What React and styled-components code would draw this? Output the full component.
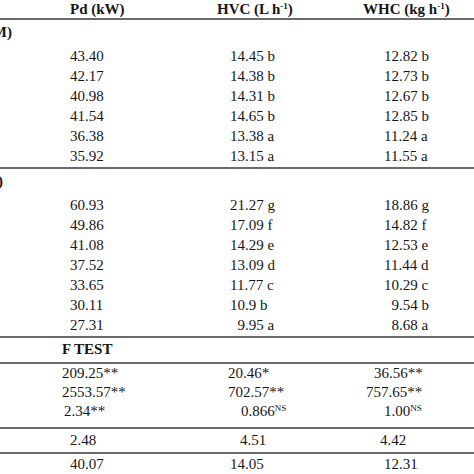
import React from "react";
import styled, { createGlobalStyle } from "styled-components";

const Global = createGlobalStyle`
  html, body { margin: 0; padding: 0; background: #fff; }
  body { font-family: "Liberation Serif", "Times New Roman", serif; color: #161616; }
`;

const Table = styled.div`
  width: 474px;
  height: 474px;
  overflow: hidden;
  font-size: 15px;
`;

const Row = styled.div`
  display: grid;
  grid-template-columns: 70px 160px 154px 90px;
  height: ${(p) => p.$h || 20}px;
  line-height: ${(p) => p.$lh || p.$h || 20}px;
  white-space: nowrap;
`;

const HeaderRow = styled(Row)`
  font-weight: bold;
  grid-template-columns: 70px 147px 146px 111px;
`;

const Rule = styled.div`
  height: 2px;
  background: #6a6a6a;
`;

const Section = styled.div`
  padding-bottom: ${(p) => p.$pb ?? 1.5}px;
`;

const LabelRow = styled.div`
  height: 20px;
  line-height: 20px;
  padding-top: 2px;
  margin-bottom: 3.5px;
  display: flex;
`;

const LabelClip = styled.div`
  width: ${(p) => p.$w}px;
  overflow: hidden;
  display: flex;
  justify-content: flex-end;
  white-space: nowrap;
  font-weight: bold;
`;

const Cell = styled.div`
  margin-left: ${(p) => p.$dx || 0}px;
  font-weight: ${(p) => (p.$bold ? "bold" : "inherit")};
`;

const Sup = styled.sup`
  font-size: 9px;
  line-height: 0;
  vertical-align: 5px;
`;

const sec1 = [
  ["43.40", "14.45 b", "12.82 b"],
  ["42.17", "14.38 b", "12.73 b"],
  ["40.98", "14.31 b", "12.67 b"],
  ["41.54", "14.65 b", "12.85 b"],
  ["36.38", "13.38 a", "11.24 a"],
  ["35.92", "13.15 a", "11.55 a"],
];

const sec2 = [
  ["60.93", "21.27 g", "18.86 g"],
  ["49.86", "17.09 f", "14.82 f"],
  ["41.08", "14.29 e", "12.53 e"],
  ["37.52", "13.09 d", "11.44 d"],
  ["33.65", "11.77 c", "10.29 c"],
  ["30.11", "10.9 b", "9.54 b"],
  ["27.31", "9.95 a", "8.68 a"],
];

const indentOf = (v) => (/^\d\./.test(v) ? 7.5 : 0);

function DataRows({ rows }) {
  return rows.map((r) => (
    <Row key={r[0]}>
      <span />
      <Cell $dx={indentOf(r[0])}>{r[0]}</Cell>
      <Cell $dx={indentOf(r[1])}>{r[1]}</Cell>
      <Cell $dx={indentOf(r[2])}>{r[2]}</Cell>
    </Row>
  ));
}

export default function App() {
  return (
    <>
      <Global />
      <Table>
        <HeaderRow $h={18}>
          <span />
          <Cell>Pd (kW)</Cell>
          <Cell>
            HVC (L h<Sup>-1</Sup>)
          </Cell>
          <Cell>
            WHC (kg h<Sup>-1</Sup>)
          </Cell>
        </HeaderRow>
        <Rule />
        <Section>
          <LabelRow>
            <LabelClip $w={12}>Rotation (RPM)</LabelClip>
          </LabelRow>
          <DataRows rows={sec1} />
        </Section>
        <Rule />
        <Section>
          <LabelRow>
            <LabelClip $w={3}>Load (kN)</LabelClip>
          </LabelRow>
          <DataRows rows={sec2} />
        </Section>
        <Rule />
        <Row $h={24} $lh={23}>
          <span />
          <Cell $dx={-8} $bold>
            F TEST
          </Cell>
          <span />
          <span />
        </Row>
        <Rule />
        <Section $pb={6}>
          <Row $h={19}>
            <span />
            <Cell $dx={-8}>209.25**</Cell>
            <Cell $dx={-2}>20.46*</Cell>
            <Cell $dx={-10}>36.56**</Cell>
          </Row>
          <Row $h={19}>
            <span />
            <Cell $dx={-8}>2553.57**</Cell>
            <Cell $dx={-2}>702.57**</Cell>
            <Cell $dx={-18}>757.65**</Cell>
          </Row>
          <Row $h={19}>
            <span />
            <Cell $dx={-6}>2.34**</Cell>
            <Cell $dx={11}>
              0.866<Sup>NS</Sup>
            </Cell>
            <Cell>
              1.00<Sup>NS</Sup>
            </Cell>
          </Row>
        </Section>
        <Rule />
        <Row $h={23}>
          <span />
          <Cell>2.48</Cell>
          <Cell $dx={10}>4.51</Cell>
          <Cell $dx={-4}>4.42</Cell>
        </Row>
        <Rule />
        <Row $h={20}>
          <span />
          <Cell>40.07</Cell>
          <Cell>14.05</Cell>
          <Cell>12.31</Cell>
        </Row>
      </Table>
    </>
  );
}
